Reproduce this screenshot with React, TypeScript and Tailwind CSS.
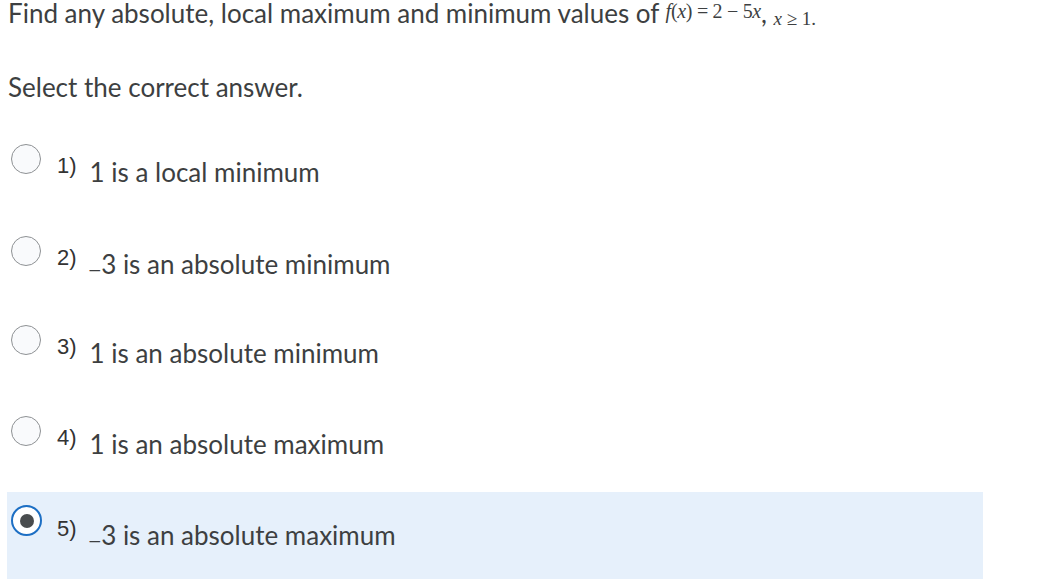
import React from 'react';

interface Choice {
  label: string;
  text: React.ReactNode;
  selected?: boolean;
  height: string;
}

const Minus = () => (
  <span className="font-['Liberation_Sans',Arial,sans-serif] text-[19px] relative top-[1px] mr-[1px]">–</span>
);

const choices: Choice[] = [
  { label: '1)', text: '1 is a local minimum', height: 'h-[92px]' },
  { label: '2)', text: <><Minus />3 is an absolute minimum</>, height: 'h-[89px]' },
  { label: '3)', text: '1 is an absolute minimum', height: 'h-[91px]' },
  { label: '4)', text: '1 is an absolute maximum', height: 'h-[91px]' },
  { label: '5)', text: <><Minus />3 is an absolute maximum</>, selected: true, height: 'h-[92px]' },
];

const Radio: React.FC<{ selected?: boolean }> = ({ selected }) =>
  selected ? (
    <div className="w-[31px] h-[31px] rounded-full border-2 border-[#1d6fc4] bg-white flex items-center justify-center shrink-0">
      <div className="w-[14px] h-[14px] rounded-full bg-[#494c4e]" />
    </div>
  ) : (
    <div className="w-[30px] h-[30px] rounded-full border border-[#8e9194] bg-[#f9fafc] shrink-0" />
  );

export default function App() {
  return (
    <div className="w-[1055px] h-[579px] overflow-hidden bg-white text-[#3d3f41] font-['Lato','Liberation_Sans',sans-serif]">
      <div className="pt-px">
        <div className="-mt-[3px] pl-[8px] text-[26px] leading-[30px] whitespace-nowrap">
          Find any absolute, local maximum and minimum values of{' '}
          <span className="font-['Liberation_Serif',serif] text-[20px] leading-[0px] align-[5px] tracking-[-0.3px]">
            <i>f</i>(<i>x</i>) = 2 − 5<i>x</i>
          </span>
          ,{' '}
          <span className="font-['Liberation_Serif',serif] text-[19px] leading-[0px] align-[-2px]">
            <i>x</i> ≥ 1.
          </span>
        </div>
        <div className="pl-[8px] mt-[44px] text-[26px] leading-[30px]">Select the correct answer.</div>
      </div>

      <div className="mt-[27px] ml-[7px] w-[976px]">
        {choices.map((c) => (
          <div key={c.label} className={`${c.height} flex items-start ${c.selected ? 'bg-[#e6f0fb]' : ''}`}>
            <div className={`ml-[4px] ${c.selected ? 'mt-[13px]' : 'mt-[15px]'}`}>
              <Radio selected={c.selected} />
            </div>
            <div className={`${c.selected ? 'ml-[15px]' : 'ml-[16px]'} mt-[26px] font-['Liberation_Sans',Arial,sans-serif] text-[22px] leading-[22px] text-[#333]`}>
              {c.label}
            </div>
            <div className="ml-[13px] mt-[28px] text-[26px] leading-[30px]">{c.text}</div>
          </div>
        ))}
      </div>
    </div>
  );
}
